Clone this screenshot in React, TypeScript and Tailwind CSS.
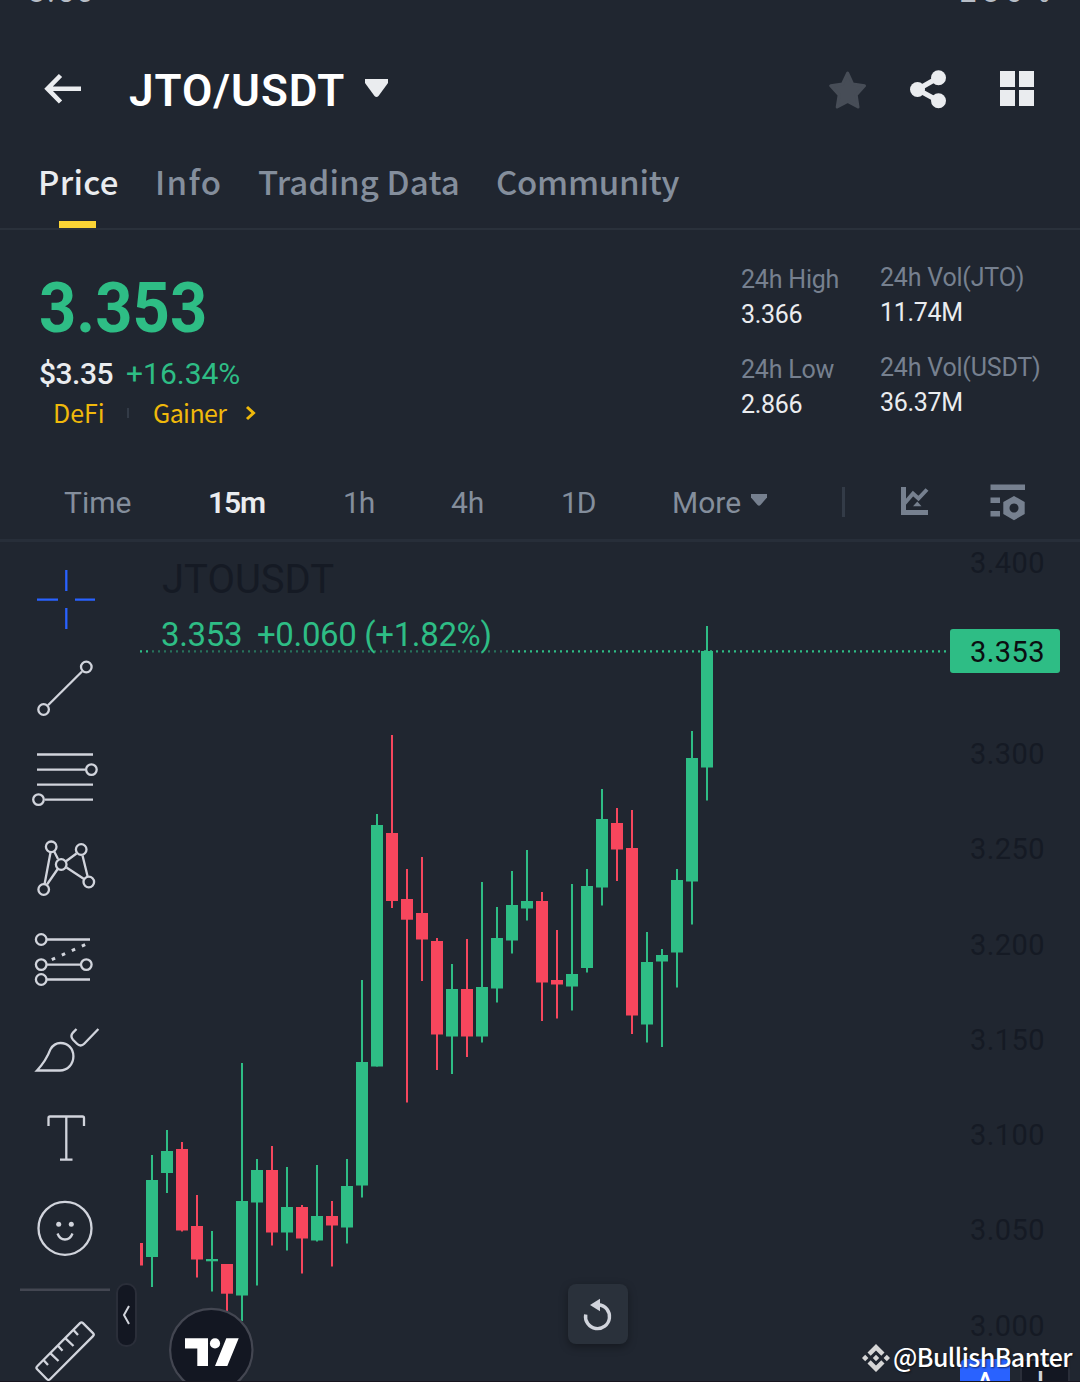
import React from "react";

const GREEN = "#2ebd85";
const RED = "#f6465d";

// [high, low, body top, body bottom, rising]
const candles: [number, number, number, number, boolean][] = [
  [1155, 1287, 1180, 1257, true],
  [1130, 1193, 1151, 1173, true],
  [1142, 1231.5, 1149, 1230.5, false],
  [1195, 1277.5, 1226, 1259.5, false],
  [1231, 1291.5, 1259, 1261.3, true],
  [1264, 1312, 1264, 1293.7, false],
  [1063, 1321, 1201, 1295.5, true],
  [1159, 1285.5, 1170, 1202.5, true],
  [1146, 1245.5, 1170, 1232.5, false],
  [1167, 1250.5, 1207, 1232.5, true],
  [1205, 1273.5, 1207, 1238.5, false],
  [1165, 1241.5, 1216, 1240.5, true],
  [1201, 1266.5, 1216, 1225.5, false],
  [1159, 1243.5, 1186, 1227.5, true],
  [980, 1197.5, 1062, 1185.5, true],
  [814, 1066.5, 825, 1066.5, true],
  [735, 908, 833, 901, false],
  [869, 1102.5, 899, 919.7, false],
  [857, 981, 913, 939.5, false],
  [938, 1070, 941, 1034.5, false],
  [964, 1074, 989, 1036.5, true],
  [939, 1057, 989, 1036.5, false],
  [882, 1042.5, 987, 1036.5, true],
  [907, 1002.5, 938, 988.5, true],
  [871, 953.5, 905, 940.5, true],
  [850, 920.5, 901, 908.5, true],
  [892, 1021, 901, 982.5, false],
  [930, 1018.5, 980, 984.5, false],
  [884, 1010.5, 974, 986.5, true],
  [869, 972.5, 886, 968, true],
  [789, 905.5, 819, 887.5, true],
  [808, 881, 823, 849.5, false],
  [810, 1034, 848, 1015.5, false],
  [932, 1042.5, 962, 1024.5, true],
  [949, 1047, 955, 961.5, true],
  [869, 987.5, 880, 952.5, true],
  [731, 924.5, 758, 881.5, true],
  [626, 800.5, 651, 767.5, true],
];

function Tool({ top, height, children }: { top: number; height: number; children: React.ReactNode }) {
  return (
    <svg
      className="block shrink-0"
      width="130"
      height={height}
      viewBox={`0 ${top} 130 ${height}`}
      fill="none"
      stroke="#d1d4dc"
      strokeWidth="2.3"
    >
      {children}
    </svg>
  );
}

function Toolbar() {
  return (
    <div className="flex h-[840px] w-[140px] shrink-0 flex-col overflow-hidden">
      <Tool top={542} height={102}>
        <path d="M66.3 570v21M66.3 608v21M37 599.7h21M75 599.7h20" stroke="#2962ff" />
      </Tool>
      <Tool top={644} height={90}>
        <path d="M48 705.2L82 671.5" />
        <circle cx="43.6" cy="709.5" r="5.3" />
        <circle cx="86.3" cy="667" r="5.3" />
      </Tool>
      <Tool top={734} height={90}>
        <path d="M37 754.5h56M37 769.6h48.5M37 784.6h56M45 799.6h48" />
        <circle cx="91.4" cy="769.6" r="5.3" />
        <circle cx="38.5" cy="799.6" r="5.3" />
      </Tool>
      <Tool top={824} height={88}>
        <path d="M50.5 852.5L44.6 884M54.2 851.5L58 859M57.7 869L47 884.5M66 861.2L76.5 853.5M66.5 867.5L84 879M82.5 855.5L87.5 876" />
        <circle cx="51.2" cy="846.8" r="5.3" />
        <circle cx="81.2" cy="849.5" r="5.3" />
        <circle cx="61.2" cy="864.5" r="5.3" />
        <circle cx="43.7" cy="889.5" r="5.3" />
        <circle cx="88.8" cy="882" r="5.3" />
      </Tool>
      <Tool top={912} height={92}>
        <path d="M47 939.5h43M47 964.6h33.5M47 979.5h43" />
        <path d="M51.8 959.7L86 944.2" strokeWidth="3" strokeDasharray="3.600 7.400" />
        <circle cx="41.2" cy="939.5" r="5.3" />
        <circle cx="41.2" cy="964.6" r="5.3" />
        <circle cx="86.3" cy="964.6" r="5.3" />
        <circle cx="41.2" cy="979.5" r="5.3" />
      </Tool>
      <Tool top={1004} height={88}>
        <path d="M37 1070.5h23c7.5 0 13.4-6.2 13.4-14.2s-5.800-13.3-12.900-13.3c-4.500 0-7.700 2.200-10 6.200-2.800 7.300-6.500 14-13.500 21.300z" />
        <path d="M76.500 1029l-3.500 3.600c-2 2.300-2 5 0 7.200l4 4c2.200 2.300 5 2.300 7.200 0l14.200-14.800" />
      </Tool>
      <Tool top={1092} height={90}>
        <path d="M48.500 1126v-8q0-1.500 1.500-1.500h32.500q1.500 0 1.500 1.500v8M66.300 1116.500v43.500M60 1159.700h12.500" />
      </Tool>
      <Tool top={1182} height={94}>
        <circle cx="65" cy="1228.300" r="26.500" />
        <circle cx="58.700" cy="1224.300" r="2.500" fill="#d1d4dc" stroke="none" />
        <circle cx="71.300" cy="1224.300" r="2.500" fill="#d1d4dc" stroke="none" />
        <path d="M57.500 1233.500c1.500 4 4.500 6 7.500 6s6-2 7.500-6" />
      </Tool>
      <Tool top={1276} height={106}>
        <path d="M20 1289.700h90" stroke="#434651" strokeWidth="2.600" />
        <path d="M37.200 1366.300L80 1323.100q1.500-1.500 3 0l10 10q1.500 1.500 0 3l-43 43.200q-1.500 1.500-3 0l-9.800-10q-1.500-1.500 0-3z" />
        <path d="M43.500 1360l4.500 5M50.500 1353.300l8 7.700M58 1345.800l4.500 5M65.500 1338.300l8 7.700M73.500 1330l4.500 5" />
      </Tool>
    </div>
  );
}

function CandleChart() {
  return (
    <svg className="block" width="810" height="840" viewBox="140 542 810 840">
      <path d="M140 651.300h8" stroke={GREEN} strokeWidth="2.200" strokeDasharray="2 4" />
      <path d="M152 651.300h358" stroke={GREEN} strokeOpacity="0.500" strokeWidth="2.200" strokeDasharray="2 4" />
      <path d="M512 651.300h436" stroke={GREEN} strokeWidth="2.200" strokeDasharray="2 4" />
      <rect x="140" y="1243" width="3" height="22.500" fill={RED} />
      {candles.map(([high, low, top, bottom, up], i) => (
        <g key={i} fill={up ? GREEN : RED}>
          <rect x={151 + i * 15} y={high} width="2" height={low - high} />
          <rect x={146 + i * 15} y={top} width="12" height={bottom - top} />
        </g>
      ))}
    </svg>
  );
}

function TradingViewMark() {
  return (
    <svg className="absolute top-[764px] left-[167px]" width="88" height="76" viewBox="167 1306 88 76">
      <circle cx="211.300" cy="1350" r="41.200" fill="#131722" stroke="#434651" strokeWidth="2.200" />
      <path d="M185 1338.300h23v27.800h-10.700v-17.600H185zM226.300 1338.300h12.400l-11.400 27.800H215z" fill="#fff" />
      <circle cx="215" cy="1343.400" r="5.100" fill="#fff" />
    </svg>
  );
}

function Stat({ label, value }: { label: string; value: string }) {
  return (
    <div className="h-[90px] whitespace-nowrap">
      <div className="h-[35px] text-[25px] leading-[35px] tracking-[-0.2px] text-[#76808f]">{label}</div>
      <div className="h-[35px] text-[25px] leading-[35px] tracking-[-0.3px] text-[#eaecef]">{value}</div>
    </div>
  );
}

const axis = ["3.300", "3.250", "3.200", "3.150", "3.100", "3.050", "3.000"];

export default function App() {
  return (
    <div className="relative h-[1382px] w-[1080px] overflow-hidden bg-[#202630] font-['Roboto',sans-serif]">
      <div className="flex h-[4px] items-end justify-between overflow-hidden pr-[24px] pl-[28px] text-[30px] leading-[30px] text-[#b7bdc6]">
        <span className="-mb-[3px] tracking-[2.5px]">8:50</span>
        <span className="-mb-[3px] tracking-[6px]">286%</span>
      </div>

      <header className="flex h-[138px] items-center pt-[31px]">
        <svg className="ml-[43px] shrink-0" width="40" height="34" viewBox="43 72 40 34" fill="none" stroke="#eaecef" strokeWidth="4.600">
          <path d="M81 88.700H48M60.500 75.500L47.500 88.700L60.500 102" />
        </svg>
        <h1 className="mt-[4px] ml-[46px] w-[236px] text-[44px] leading-[52px] font-semibold tracking-[1px] whitespace-nowrap text-white">JTO/USDT</h1>
        <svg className="shrink-0" width="24" height="20" viewBox="365 79 24 20">
          <path d="M365 79h23v4l-9.500 13q-2 2-4 0L365 83z" fill="#eaecef" />
        </svg>
        <svg className="mt-[2px] ml-[440px] shrink-0" width="38" height="40" viewBox="829 69 38 40">
          <path d="M847.700 72l5 11 11.800 1.800-8.300 9.200 1.800 12-10.300-5.500-10.500 5.500 1.900-12-8.400-9.200 11.800-1.800z" fill="#474d57" stroke="#474d57" strokeWidth="3" strokeLinejoin="round" />
        </svg>
        <svg className="ml-[43px] shrink-0" width="38" height="40" viewBox="910 68 38 40">
          <path d="M938.500 76.500L917.500 88.500L938.500 100" stroke="#eaecef" strokeWidth="5" fill="none" />
          <g fill="#eaecef">
            <circle cx="938.500" cy="76.700" r="7.500" />
            <circle cx="917.500" cy="88.500" r="7.500" />
            <circle cx="938.500" cy="99.800" r="7.500" />
          </g>
        </svg>
        <svg className="ml-[52px] shrink-0" width="34" height="35" viewBox="0 0 34 35" fill="#eaecef">
          <path d="M0 0h15v16H0zM19 0h15v16H19zM0 19h15v16H0zM19 19h15v16H19z" />
        </svg>
      </header>

      <nav className="flex h-[88px] border-b-2 border-[#2a313b] font-['Noto_Sans_CJK_SC',sans-serif] text-[33px] leading-[78px] font-medium whitespace-nowrap text-[#848e9c]">
        <div className="ml-[38px] w-[117px] tracking-[0.300px] text-[#eaecef]">
          Price
          <div className="mt-[1px] ml-[21px] h-[7px] w-[37px] bg-[#fcd535]" />
        </div>
        <div className="w-[103px] tracking-[1.300px]">Info</div>
        <div className="w-[238px] tracking-[0.150px]">Trading Data</div>
        <div className="tracking-[-0.250px]">Community</div>
      </nav>

      <section className="flex h-[231px]">
        <div className="w-[741px] pt-[39px] pl-[39px] whitespace-nowrap">
          <div className="h-[76px] origin-left scale-x-[0.93] text-[70px] leading-[78px] font-bold text-[#2ebd85]">3.353</div>
          <div className="mt-[11px] flex h-[36px] text-[30px] leading-[36px]">
            <span className="w-[87px] font-medium tracking-[-0.500px] text-[#eaecef]">$3.35</span>
            <span className="text-[#2ebd85]">+16.34%</span>
          </div>
          <div className="mt-[3px] flex h-[36px] items-center pl-[14px] font-['Noto_Sans_CJK_SC',sans-serif] text-[25px] leading-[36px] text-[#f0b90b]">
            <span className="-mt-[3px] w-[74px]">DeFi</span>
            <span className="mr-[24px] h-[10px] w-[2px] bg-[#333b47]" />
            <span className="-mt-[3px] w-[92px] tracking-[-0.600px]">Gainer</span>
            <svg width="12" height="16" viewBox="0 0 12 16" fill="none" stroke="#f0b90b" strokeWidth="3">
              <path d="M2 2l6.500 6L2 14" />
            </svg>
          </div>
        </div>
        <div className="w-[139px] pt-[32px]">
          <Stat label="24h High" value="3.366" />
          <Stat label="24h Low" value="2.866" />
        </div>
        <div className="pt-[30px]">
          <Stat label="24h Vol(JTO)" value="11.74M" />
          <Stat label="24h Vol(USDT)" value="36.37M" />
        </div>
      </section>

      <div className="flex h-[81px] items-center border-b-[3px] border-[#272e39] pt-[4px] text-[30px] whitespace-nowrap text-[#848e9c]">
        <span className="ml-[64px] w-[144px]">Time</span>
        <span className="w-[135px] font-semibold tracking-[-1.200px] text-[#eaecef]">15m</span>
        <span className="w-[108px] tracking-[-1px]">1h</span>
        <span className="w-[110px]">4h</span>
        <span className="w-[111px] tracking-[-1px]">1D</span>
        <span className="w-[79px]">More</span>
        <svg className="-mt-[4px] shrink-0" width="16" height="13" viewBox="0 0 16 13">
          <path d="M0 0h16v3.500L9.500 11q-1.500 1.500-3 0L0 3.500z" fill="#76808f" />
        </svg>
        <span className="ml-[75px] h-[30px] w-[3px] bg-[#333b47]" />
        <svg className="-mt-[2px] ml-[56px] shrink-0" width="28" height="28" viewBox="901 487 28 28">
          <path d="M903.500 487v25.500H928" fill="none" stroke="#76808f" strokeWidth="5" />
          <path d="M904 504l9-10.500 5.500 5 8.500-9" fill="none" stroke="#76808f" strokeWidth="4" />
          <path d="M917.300 501.500l4.200 4.800h-8.500z" fill="#76808f" />
        </svg>
        <svg className="ml-[61px] shrink-0" width="36" height="37" viewBox="990 484 36 37">
          <path d="M990.500 484.500h34.500v5.500h-34.500zM990.500 497.500h9.500v5.500h-9.500zM990.500 511h9.500v5.500h-9.500z" fill="#76808f" />
          <path fillRule="evenodd" d="M1014 496l10.700 6v12l-10.700 6.200-10.700-6.200v-12zM1014 503.500a4.500 4.500 0 1 0 .01 0z" fill="#76808f" />
        </svg>
      </div>

      <main className="relative flex h-[840px]">
        <Toolbar />
        <CandleChart />
        <div className="w-[130px] text-[29px] leading-[44px] tracking-[0.400px] text-[#151a24]">
          <div className="h-[87px] pl-[20px] leading-[43px]">3.400</div>
          <div className="-mb-[1px] h-[44px] w-[110px] rounded-[3px] bg-[#2ebd85] pl-[20px] leading-[46px] text-[#0b0e11]">3.353</div>
          <div className="pt-[60px]">
            {axis.map((p) => (
              <div key={p} className="h-[95.300px] pl-[20px]">{p}</div>
            ))}
          </div>
        </div>

        <div className="absolute top-[13px] left-[161px] whitespace-nowrap">
          <div className="h-[50px] pl-[1px] text-[40px] leading-[50px] text-[#151a24]">JTOUSDT</div>
          <div className="mt-[9px] flex h-[40px] text-[33px] leading-[41px] tracking-[-0.350px] text-[#2ebd85]">
            <span className="w-[96px]">3.353</span>
            <span>+0.060 (+1.82%)</span>
          </div>
        </div>

        <div className="absolute top-[741px] left-[116px] flex h-[64px] w-[21px] items-center justify-center rounded-[10px] border-2 border-[#2a2e39] bg-[#131722]">
          <svg className="shrink-0" width="9" height="20" viewBox="0 0 9 20" fill="none" stroke="#d1d4dc" strokeWidth="2">
            <path d="M7 1L2 10l5 9" />
          </svg>
        </div>
        <TradingViewMark />
        <div className="absolute top-[742px] left-[568px] h-[60px] w-[60px] rounded-[8px] bg-[#2a313b] shadow-[0_3px_8px_rgba(0,0,0,0.350)]">
          <svg width="60" height="60" viewBox="568 1284 60 60">
            <path d="M585.700 1314.500a12 12 0 1 0 13-9.800" fill="none" stroke="#d1d4dc" strokeWidth="3.400" />
            <path d="M590 1305l10-6.300v12.600z" fill="#d1d4dc" />
          </svg>
        </div>

        <div className="absolute top-[817px] left-[960px] flex gap-[10px] text-[26px] leading-[46px] font-medium text-white">
          <div className="h-[42px] w-[50px] rounded-[6px] bg-[#2962ff] text-center">A</div>
          <div className="h-[42px] w-[50px] rounded-[6px] border-2 border-[#2a2e39] bg-[#131722] pl-[15px] leading-[41px] text-[#d1d4dc]">L</div>
        </div>
        <div className="absolute top-[795px] left-[862px] flex items-center font-['Noto_Sans_CJK_SC',sans-serif] text-[25px] leading-[38px] font-medium tracking-[-0.550px] whitespace-nowrap text-white [text-shadow:1px_1px_2px_rgba(0,0,0,0.600)]">
          <svg className="mt-[4px] mr-[3px]" width="28" height="28" viewBox="0 0 28 28" fill="#d6d6d6">
            <path d="M14 0l8.500 8.500-3.200 3.200L14 6.400l-5.300 5.300-3.200-3.200zM14 28l8.500-8.500-3.200-3.200L14 21.600l-5.300-5.300-3.200 3.200zM14 10.800l3.200 3.200-3.200 3.200-3.200-3.200zM3.200 10.800L6.400 14l-3.200 3.200L0 14zM24.800 10.800L28 14l-3.200 3.200-3.200-3.200z" />
          </svg>
          @BullishBanter
        </div>
        <div className="absolute bottom-0 left-0 h-[1px] w-full bg-[#17151f]" />
      </main>
    </div>
  );
}
